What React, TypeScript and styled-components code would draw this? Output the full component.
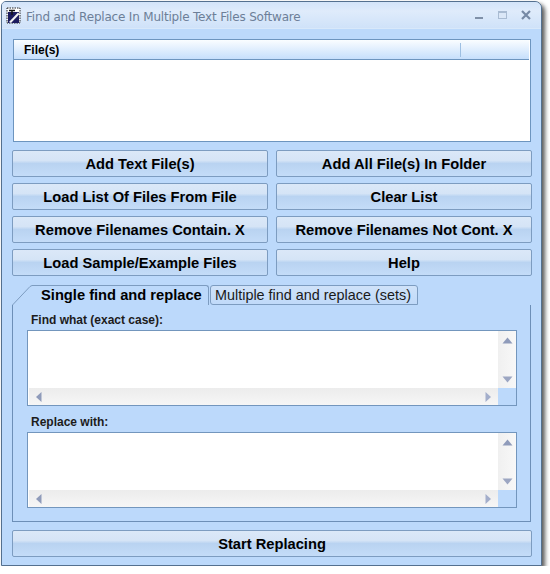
import styled, { createGlobalStyle } from "styled-components";

const GlobalStyle = createGlobalStyle`
  html, body {
    margin: 0;
    padding: 0;
    background: #fff;
  }
  body {
    font-family: "Liberation Sans", Arial, sans-serif;
  }
`;

const Window = styled.div`
  box-sizing: border-box;
  width: 541px;
  height: 565px;
  margin: 1px 0 0 1px;
  border: 1px solid #54708f;
  border-radius: 5px 7px 0 0;
  background: #bcd9fb;
  box-shadow: 3px 3px 4px rgba(0, 0, 0, 0.65);
  display: flex;
  flex-direction: column;
`;

const TitleBar = styled.div`
  box-sizing: border-box;
  height: 27px;
  flex: none;
  display: flex;
  align-items: center;
  padding: 0 9px 0 4px;
  border-radius: 4px 6px 0 0;
  border-bottom: 1px solid #d8e8fa;
  background: linear-gradient(#d3e4f9 0%, #dfebfb 35%, #cfe2f9 100%);
`;

const Title = styled.div`
  flex: 1;
  margin-left: 4px;
  padding-top: 4px;
  font-family: "DejaVu Sans", sans-serif;
  font-size: 12px;
  letter-spacing: -0.19px;
  color: #6d7f98;
`;

const WinButtons = styled.div`
  display: flex;
  align-items: center;
  gap: 12px;
`;

const Client = styled.div`
  flex: 1;
  display: flex;
  flex-direction: column;
  padding: 10px 9px 0 10px;
`;

const ListBox = styled.div`
  box-sizing: border-box;
  height: 103px;
  margin: 0 1px;
  border: 1px solid #6d95bf;
  background: #fff;
`;

const ListHeader = styled.div`
  box-sizing: border-box;
  height: 20px;
  margin-right: 1px;
  display: flex;
  align-items: center;
  border-bottom: 1px solid #6d95bf;
  background: linear-gradient(#fafdff, #c6dffc);
  font-size: 12px;
  font-weight: 700;
  color: #000;
`;

const HeaderName = styled.div`
  flex: 1;
  padding-left: 10px;
`;

const HeaderRest = styled.div`
  width: 68px;
  height: 14px;
  border-left: 1px solid #9dbfe2;
`;

const ButtonGrid = styled.div`
  display: grid;
  grid-template-columns: 256px 256px;
  grid-auto-rows: 27px;
  column-gap: 8px;
  row-gap: 6px;
  margin-top: 8px;
`;

const Button = styled.button`
  box-sizing: border-box;
  height: 27px;
  padding: 0;
  border: 1px solid #7d9cc0;
  border-radius: 2px;
  background: linear-gradient(#dbe8f8 0%, #d5e4f6 38%, #b9d3f1 50%, #c4dcf8 100%);
  font-family: "Liberation Sans", Arial, sans-serif;
  font-size: 14.7px;
  font-weight: 700;
  color: #000;
`;

const TabStrip = styled.div`
  display: flex;
  height: 20px;
  margin-top: 9px;
`;

const Slant = styled.svg`
  flex: none;
  display: block;
  width: 20px;
  height: 20px;
`;

const ActiveTab = styled.div`
  box-sizing: border-box;
  width: 177px;
  padding: 1px 0 0 9px;
  border-top: 1px solid #7d9cc0;
  border-right: 1px solid #7d9cc0;
  border-radius: 0 3px 0 0;
  font-size: 14.7px;
  font-weight: 700;
  color: #000;
`;

const IdleTab = styled.div`
  box-sizing: border-box;
  width: 208px;
  margin-left: 1px;
  padding: 1px 0 0 4px;
  border: 1px solid #7d9cc0;
  border-radius: 3px 3px 0 3px;
  background: linear-gradient(#cfe2f9, #c0daf9);
  font-size: 14.4px;
  color: #1a1a1a;
`;

const TabPane = styled.div`
  box-sizing: border-box;
  height: 217px;
  width: 519px;
  padding: 8px 13px 0 14px;
  border: 1px solid #6d8fb7;
  border-top: none;
`;

const FieldLabel = styled.div`
  height: 17px;
  padding-left: 4px;
  font-size: 12px;
  font-weight: 700;
  color: #1c1c1c;
  line-height: 15px;
`;

const ScrollText = styled.div`
  box-sizing: border-box;
  height: 76px;
  margin-bottom: 9px;
  border: 1px solid #7396bd;
  background: #fff;
  display: grid;
  grid-template-columns: 1fr 18px;
  grid-template-rows: 1fr 17px;
`;

const TextBody = styled.div`
  background: #fff;
`;

const VScroll = styled.div`
  display: flex;
  flex-direction: column;
  justify-content: space-between;
  align-items: center;
  padding: 6px 0 5px;
  background: linear-gradient(90deg, #f0f0f0, #f8f8f8);
`;

const HScroll = styled.div`
  display: flex;
  justify-content: space-between;
  align-items: center;
  padding: 0 7px 0 7px;
  margin-left: 1px;
  background: linear-gradient(#ececec, #f6f6f6);
`;

const Corner = styled.div`
  background: #bcd9fb;
`;

const StartButton = styled(Button)`
  width: 520px;
  margin-top: 8px;
`;

const Arrow = styled.svg`
  display: block;
  flex: none;
`;

function UpArrow() {
  return (
    <Arrow width="11" height="7" viewBox="0 0 11 7">
      <path d="M5.5 0.5 L10.5 6.5 L0.5 6.5 Z" fill="#8f9bba" />
    </Arrow>
  );
}

function DownArrow() {
  return (
    <Arrow width="11" height="7" viewBox="0 0 11 7">
      <path d="M0.5 0.5 L10.5 0.5 L5.5 6.5 Z" fill="#9ca6c2" />
    </Arrow>
  );
}

function LeftArrow() {
  return (
    <Arrow width="6" height="10" viewBox="0 0 6 10">
      <path d="M5.5 0 L5.5 10 L0 5 Z" fill="#8f9bba" />
    </Arrow>
  );
}

function RightArrow() {
  return (
    <Arrow width="6" height="10" viewBox="0 0 6 10">
      <path d="M0.5 0 L0.5 10 L6 5 Z" fill="#a3aecb" />
    </Arrow>
  );
}

function AppIcon() {
  return (
    <svg width="16" height="18" viewBox="0 0 16 18" style={{ flex: "none" }}>
      <rect x="1" y="2" width="13" height="15" fill="#fff" stroke="#222" strokeDasharray="1.5 1" />
      <rect x="2" y="6" width="11" height="11" fill="#1b1b5e" />
      <path d="M3 16 L12 6.5 L13.5 8 L5 17 Z" fill="#f2f2f2" />
      <path d="M3 4.5 H9 M6 4.5 V9" stroke="#111" strokeWidth="1.4" fill="none" />
    </svg>
  );
}

function WindowControls() {
  return (
    <WinButtons>
      <svg width="12" height="12" viewBox="0 0 12 12">
        <rect x="2" y="8" width="8" height="2" fill="#7f90a8" />
      </svg>
      <svg width="11" height="12" viewBox="0 0 11 12">
        <rect x="1.5" y="2.5" width="8" height="7" fill="#dbe7f7" stroke="#a9bbd2" />
        <rect x="1" y="2" width="9" height="2" fill="#a9bbd2" />
      </svg>
      <svg width="12" height="12" viewBox="0 0 12 12">
        <path d="M2 2 L10 10 M10 2 L2 10" stroke="#7689a5" strokeWidth="2.2" fill="none" />
      </svg>
    </WinButtons>
  );
}

function ScrollField() {
  return (
    <ScrollText>
      <TextBody />
      <VScroll>
        <UpArrow />
        <DownArrow />
      </VScroll>
      <HScroll>
        <LeftArrow />
        <RightArrow />
      </HScroll>
      <Corner />
    </ScrollText>
  );
}

const buttons = [
  "Add Text File(s)",
  "Add All File(s) In Folder",
  "Load List Of Files From File",
  "Clear List",
  "Remove Filenames Contain. X",
  "Remove Filenames Not Cont. X",
  "Load Sample/Example Files",
  "Help",
];

export default function App() {
  return (
    <>
      <GlobalStyle />
      <Window>
        <TitleBar>
          <AppIcon />
          <Title>Find and Replace In Multiple Text Files Software</Title>
          <WindowControls />
        </TitleBar>
        <Client>
          <ListBox>
            <ListHeader>
              <HeaderName>File(s)</HeaderName>
              <HeaderRest />
            </ListHeader>
          </ListBox>
          <ButtonGrid>
            {buttons.map((label) => (
              <Button key={label}>{label}</Button>
            ))}
          </ButtonGrid>
          <TabStrip>
            <Slant viewBox="0 0 20 20">
              <path d="M0.5 20 L18 1.5 L20 0.5" fill="none" stroke="#7d9cc0" />
            </Slant>
            <ActiveTab>Single find and replace</ActiveTab>
            <IdleTab>Multiple find and replace (sets)</IdleTab>
          </TabStrip>
          <TabPane>
            <FieldLabel>Find what (exact case):</FieldLabel>
            <ScrollField />
            <FieldLabel>Replace with:</FieldLabel>
            <ScrollField />
          </TabPane>
          <StartButton>Start Replacing</StartButton>
        </Client>
      </Window>
    </>
  );
}
